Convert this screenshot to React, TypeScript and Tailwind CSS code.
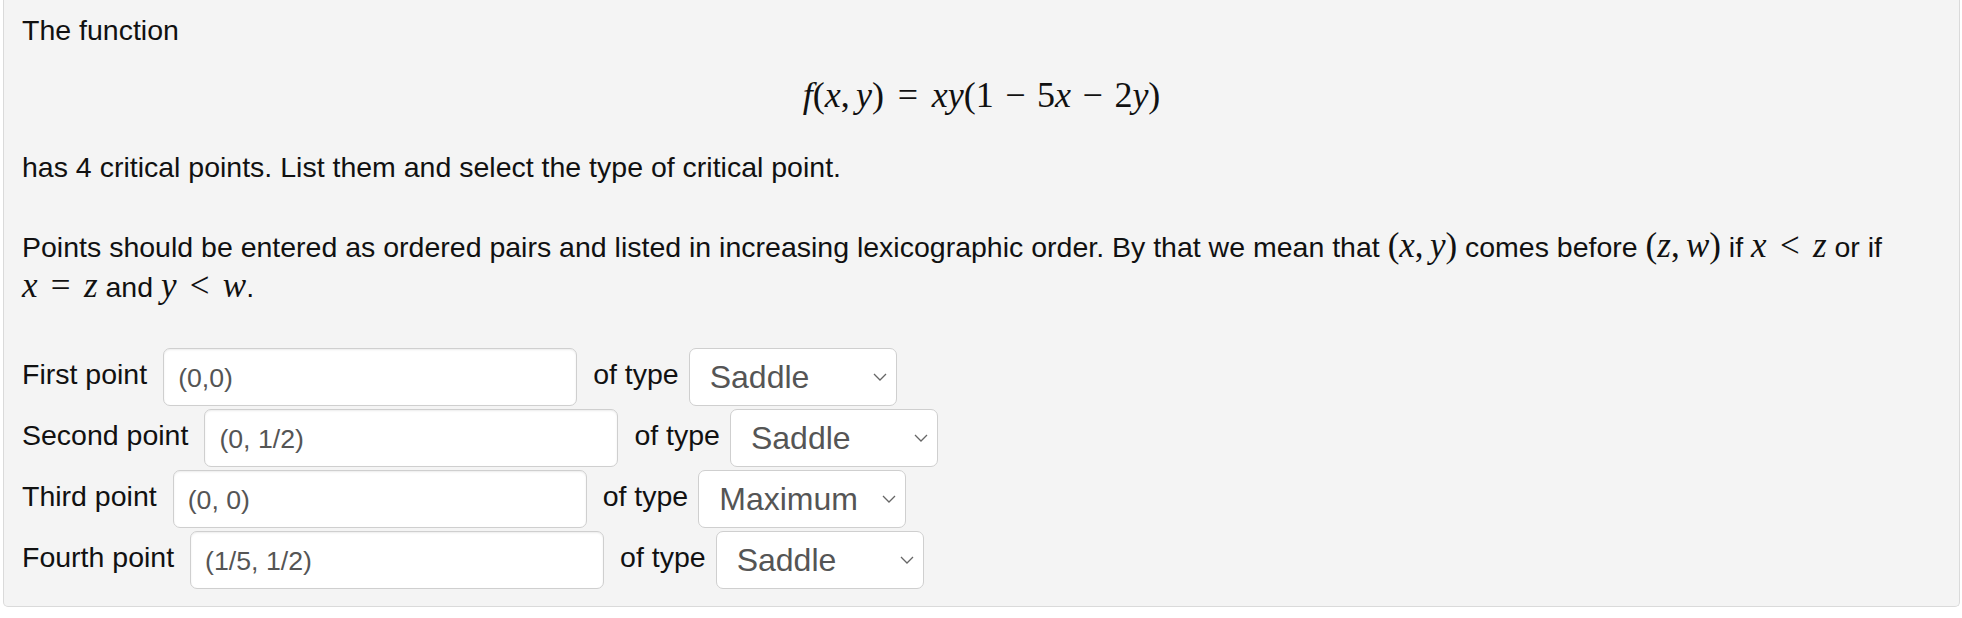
import React from 'react'

// ── Math helpers ──────────────────────────────────────────────────────────────

const serif = "font-['Liberation_Serif','Times_New_Roman',serif]"

function V({ c }: { c: string }) {
  return <i className="italic">{c}</i>
}

function Rel({ c }: { c: string }) {
  return <span className="mx-[0.38em]">{c}</span>
}

function Bin({ c }: { c: string }) {
  return <span className="mx-[0.32em]">{c}</span>
}

function Comma() {
  return <span className="mr-[0.18em]">,</span>
}

function M({ children }: { children: React.ReactNode }) {
  return <span className={serif + ' text-[35px] leading-none'}>{children}</span>
}

// ── Row ───────────────────────────────────────────────────────────────────────

function Chevron() {
  return (
    <svg width="14" height="8" viewBox="0 0 14 8" fill="none" className="shrink-0">
      <polyline points="1,1 7,7 13,1" stroke="#666" strokeWidth="1.3" />
    </svg>
  )
}

function PointRow({ label, value, type }: { label: string; value: string; type: string }) {
  return (
    <div className="flex h-[61px] items-center">
      <span className="mb-[6px]">{label}</span>
      <input
        readOnly
        value={value}
        className="ml-[16px] h-[58px] w-[414px] rounded-[7px] border border-[#cfcfcf] bg-white px-[14px] pt-[4px] text-[26.7px] text-[#555] shadow-[inset_0_1px_2px_rgba(0,0,0,0.08)] outline-none"
      />
      <span className="mb-[6px] ml-[16px]">of type</span>
      <div className="ml-[10px] flex h-[58px] w-[208px] items-center justify-between rounded-[7px] border border-[#cfcfcf] bg-white pl-[20px] pr-[9px] text-[32px] text-[#555]">
        <span>{type}</span>
        <Chevron />
      </div>
    </div>
  )
}

// ── App ───────────────────────────────────────────────────────────────────────

export default function App() {
  const rows = [
    { label: 'First point',  value: '(0,0)',      type: 'Saddle' },
    { label: 'Second point', value: '(0, 1/2)',   type: 'Saddle' },
    { label: 'Third point',  value: '(0, 0)',     type: 'Maximum' },
    { label: 'Fourth point', value: '(1/5, 1/2)', type: 'Saddle' },
  ]

  return (
    <div className="min-h-screen bg-white font-['Liberation_Sans',Arial,sans-serif] text-[28.5px] leading-[40px] text-[#111]">
      <div className="ml-[3px] mr-[2px] rounded-b-[5px] border border-t-0 border-[#dadada] bg-[#f4f4f4] pb-[16px] pl-[18px] pr-[18px] pt-[10px]">

        <p>The function</p>

        <div className={serif + ' mt-[25px] text-center text-[36px] leading-[40px]'}>
          <V c="f" />(<V c="x" /><Comma /><V c="y" />)
          <Rel c="=" />
          <V c="x" /><V c="y" />(1<Bin c="−" />5<V c="x" /><Bin c="−" />2<V c="y" />)
        </div>

        <p className="mt-[32px]">has 4 critical points. List them and select the type of critical point.</p>

        <p className="mt-[40px]">
          <span className="whitespace-nowrap">
            Points should be entered as ordered pairs and listed in increasing lexicographic order. By that we mean that{' '}
            <M>(<V c="x" /><Comma /><V c="y" />)</M> comes before{' '}
            <M>(<V c="z" /><Comma /><V c="w" />)</M> if <M><V c="x" /><Rel c="<" /><V c="z" /></M> or if
          </span>
          <br />
          <M><V c="x" /><Rel c="=" /><V c="z" /></M> and <M><V c="y" /><Rel c="<" /><V c="w" /></M>.
        </p>

        <div className="mt-[39px]">
          {rows.map(r => (
            <PointRow key={r.label} {...r} />
          ))}
        </div>
      </div>
    </div>
  )
}
